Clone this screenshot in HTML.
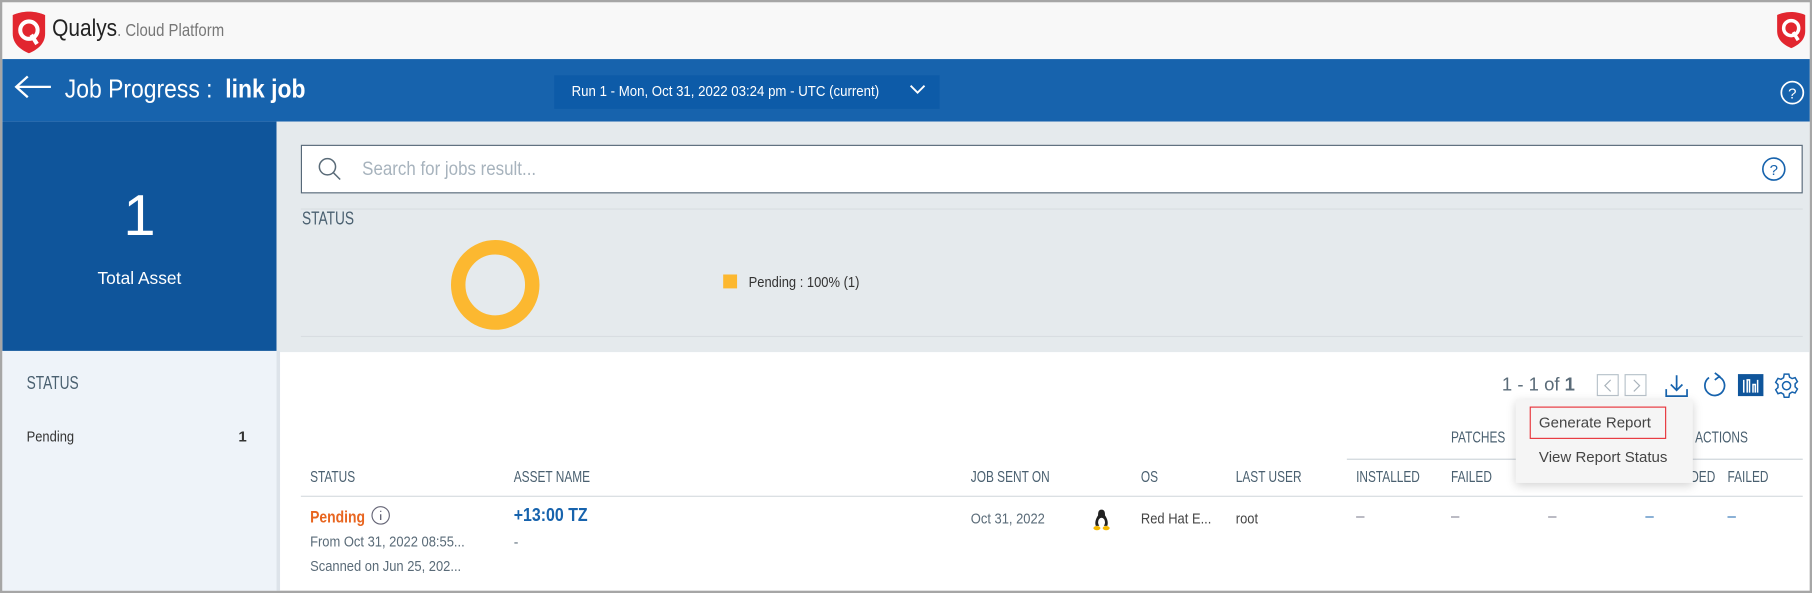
<!DOCTYPE html>
<html><head><meta charset="utf-8"><style>
*{margin:0;padding:0;box-sizing:border-box}
html,body{width:1812px;height:593px;overflow:hidden;background:#fff}
#w{position:absolute;left:0;top:0;width:1566px;height:512px;transform:scale(1.15709,1.1582);transform-origin:0 0;font-family:"Liberation Sans",sans-serif;border:2px solid #a6a6a6;overflow:hidden}
.a{position:absolute;white-space:nowrap}
.n{transform:scaleX(.86);transform-origin:0 0}
.h{color:#4a6070;font-size:13.5px;transform:scaleX(.76);transform-origin:0 0}
</style></head><body><div id="w">
<div class="a" style="left:0;top:0;width:1566px;height:49px;background:#f8f8f8"></div>
<svg class="a" style="left:8px;top:7px" width="30" height="38" viewBox="0 0 30 38"><path d="M15 1 C7 1 1 4 1 4 V20 C1 29 8 34 15 37 C22 34 29 29 29 20 V4 C29 4 23 1 15 1Z" fill="#e2262f"/><circle cx="15" cy="17" r="7.5" fill="none" stroke="#fff" stroke-width="3.5"/><path d="M17 21 L22 29" stroke="#fff" stroke-width="3.5"/></svg>
<div class="a n" style="left:43px;top:11px;font-size:21px;color:#222">Qualys<span style="font-size:15px;color:#777">. Cloud Platform</span></div>
<svg class="a" style="left:1533px;top:7px" width="26" height="34" viewBox="0 0 30 38"><path d="M15 1 C7 1 1 4 1 4 V20 C1 29 8 34 15 37 C22 34 29 29 29 20 V4 C29 4 23 1 15 1Z" fill="#e2262f"/><circle cx="15" cy="17" r="7.5" fill="none" stroke="#fff" stroke-width="3.5"/><path d="M17 21 L22 29" stroke="#fff" stroke-width="3.5"/></svg>
<div class="a" style="left:0;top:49px;width:1566px;height:54px;background:#1763ad"></div>
<svg class="a" style="left:10px;top:62px" width="34" height="22"><path d="M2 11 H32 M12 2 L2 11 L12 20" stroke="#fff" stroke-width="2" fill="none"/></svg>
<div class="a n" style="left:54px;top:62px;font-size:22px;color:#fff;transform:scaleX(.9)">Job Progress :&nbsp; <b>link job</b></div>
<div class="a" style="left:477px;top:63px;width:333px;height:29px;background:#0d5ba8"></div>
<div class="a n" style="left:492px;top:69px;font-size:13px;color:#fff;transform:scaleX(.88)">Run 1 - Mon, Oct 31, 2022 03:24 pm - UTC (current)</div>
<svg class="a" style="left:784px;top:70px" width="14" height="10"><path d="M1 2 L7 8 L13 2" stroke="#fff" stroke-width="1.6" fill="none"/></svg>
<svg class="a" style="left:1536px;top:67px" width="22" height="22"><circle cx="11" cy="11" r="9.5" stroke="#fff" stroke-width="1.5" fill="none"/><text x="11" y="16" text-anchor="middle" font-size="13" fill="#fff" font-family="Liberation Sans">?</text></svg>
<div class="a" style="left:0;top:103px;width:237px;height:198px;background:#0f559b"></div>
<div class="a" style="left:0;top:155px;width:237px;text-align:center;font-size:50px;color:#fff">1</div>
<div class="a" style="left:0;top:230px;width:237px;text-align:center;font-size:15px;color:#fff">Total Asset</div>
<div class="a" style="left:237px;top:103px;width:1329px;height:199px;background:#e5eaed"></div>
<div class="a" style="left:258px;top:123px;width:1298px;height:42px;background:#fff;border:1px solid #566878"></div>
<svg class="a" style="left:271px;top:132px" width="24" height="24"><circle cx="10" cy="10" r="7" stroke="#5a6b78" stroke-width="1.3" fill="none"/><path d="M15 15 L21 21" stroke="#5a6b78" stroke-width="1.3"/></svg>
<div class="a n" style="left:311px;top:134px;font-size:17px;color:#a7b3bd">Search for jobs result...</div>
<svg class="a" style="left:1520px;top:133px" width="22" height="22"><circle cx="11" cy="11" r="9.5" stroke="#1763ad" stroke-width="1.4" fill="none"/><text x="11" y="16" text-anchor="middle" font-size="13" fill="#1763ad" font-family="Liberation Sans">?</text></svg>
<div class="a" style="left:258px;top:178px;width:1298px;height:1px;background:#d8dde1"></div>
<div class="a h" style="left:259px;top:179px;font-size:16px;transform:scaleX(.74)">STATUS</div>
<svg class="a" style="left:384px;top:203px" width="84" height="84"><ellipse cx="42" cy="41" rx="32" ry="32.5" stroke="#fcb830" stroke-width="12.5" fill="none"/></svg>
<div class="a" style="left:623px;top:235px;width:12px;height:12px;background:#fcb830"></div>
<div class="a n" style="left:645px;top:234px;font-size:13px;color:#333">Pending : 100% (1)</div>
<div class="a" style="left:258px;top:288px;width:1298px;height:1px;background:#d8dde1"></div>
<div class="a" style="left:0;top:301px;width:237px;height:211px;background:#eef3f9"></div>
<div class="a" style="left:237px;top:301px;width:3px;height:211px;background:#dde3ea"></div>
<div class="a h" style="left:21px;top:321px;font-size:16px;transform:scaleX(.74)">STATUS</div>
<div class="a n" style="left:21px;top:367px;font-size:13px;color:#333">Pending</div>
<div class="a" style="left:204px;top:367px;font-size:13px;color:#333;font-weight:bold">1</div>
<div class="a" style="left:1296px;top:322px;font-size:16px;color:#5a6b78">1 - 1 of&nbsp;<b>1</b></div>
<div class="a" style="left:1378px;top:321px;width:19px;height:19px;border:1px solid #b8c2ca"></div>
<svg class="a" style="left:1383px;top:325px" width="10" height="12"><path d="M7 1 L2 6 L7 11" stroke="#a8b2ba" fill="none"/></svg>
<div class="a" style="left:1402px;top:321px;width:19px;height:19px;border:1px solid #b8c2ca"></div>
<svg class="a" style="left:1407px;top:325px" width="10" height="12"><path d="M3 1 L8 6 L3 11" stroke="#a8b2ba" fill="none"/></svg>
<svg class="a" style="left:1436px;top:320px" width="22" height="22"><path d="M11 2 V15 M6 10 L11 15 L16 10 M2 14 V20 H20 V14" stroke="#1763ad" stroke-width="1.5" fill="none"/></svg>
<svg class="a" style="left:1468px;top:319px" width="24" height="24"><path d="M15 4 A8.5 8.5 0 1 1 7 5" stroke="#1763ad" stroke-width="1.5" fill="none"/><path d="M12 1 L16 4 L12 7" stroke="#1763ad" stroke-width="1.5" fill="none"/></svg>
<div class="a" style="left:1500px;top:321px;width:22px;height:19px;background:#0f559b"></div>
<svg class="a" style="left:1502px;top:323px" width="18" height="15"><path d="M3 14 V3 M6 14 V3 H8 V14 M11 14 V7 H13 V14 M15 14 V3" stroke="#fff" stroke-width="1.3" fill="none"/></svg>
<svg class="a" style="left:1530px;top:319px" width="24" height="24" viewBox="0 0 24 24"><path d="M10 2h4l.6 2.6 2.2 1.3 2.6-.8 2 3.4-2 1.9v2.6l2 1.9-2 3.4-2.6-.8-2.2 1.3L14 22h-4l-.6-2.6-2.2-1.3-2.6.8-2-3.4 2-1.9v-2.6l-2-1.9 2-3.4 2.6.8 2.2-1.3z" stroke="#1763ad" stroke-width="1.3" fill="none"/><circle cx="12" cy="12" r="3.5" stroke="#1763ad" stroke-width="1.3" fill="none"/></svg>
<div class="a h" style="left:1252px;top:368px">PATCHES</div>
<div class="a h" style="left:1463px;top:368px">ACTIONS</div>
<div class="a" style="left:1162px;top:394px;width:394px;height:1px;background:#ccd3d9"></div>
<div class="a h" style="left:266px;top:402px">STATUS</div>
<div class="a h" style="left:442px;top:402px">ASSET NAME</div>
<div class="a h" style="left:837px;top:402px">JOB SENT ON</div>
<div class="a h" style="left:984px;top:402px">OS</div>
<div class="a h" style="left:1066px;top:402px">LAST USER</div>
<div class="a h" style="left:1170px;top:402px">INSTALLED</div>
<div class="a h" style="left:1252px;top:402px">FAILED</div>
<div class="a h" style="left:1336px;top:402px">SKIPPED</div>
<div class="a h" style="left:1416px;top:402px">SUCCEEDED</div>
<div class="a h" style="left:1491px;top:402px">FAILED</div>
<div class="a" style="left:258px;top:426px;width:1298px;height:1px;background:#d6dbdf"></div>
<div class="a n" style="left:266px;top:436px;font-size:14px;color:#e8651f;font-weight:bold">Pending</div>
<svg class="a" style="left:318px;top:434px" width="18" height="18"><circle cx="9" cy="9" r="7.5" stroke="#667" fill="none"/><path d="M9 8 V13 M9 5 V6" stroke="#667" stroke-width="1.2"/></svg>
<div class="a n" style="left:266px;top:458px;font-size:13px;color:#5a6b78">From Oct 31, 2022 08:55...</div>
<div class="a n" style="left:266px;top:479px;font-size:13px;color:#5a6b78">Scanned on Jun 25, 202...</div>
<div class="a n" style="left:442px;top:435px;font-size:16px;color:#1763ad;font-weight:bold">+13:00 TZ</div>
<div class="a" style="left:442px;top:459px;font-size:12px;color:#5a6b78">-</div>
<div class="a n" style="left:837px;top:438px;font-size:13px;color:#5a6b78">Oct 31, 2022</div>
<svg class="a" style="left:942px;top:437px" width="16" height="20"><path d="M8 1 C5 1 5 4 5 6 C3 9 2 12 3 15 L13 15 C14 12 13 9 11 6 C11 4 11 1 8 1Z" fill="#222"/><ellipse cx="8" cy="12" rx="3" ry="4" fill="#fff"/><ellipse cx="4" cy="17" rx="3" ry="1.8" fill="#f5b800"/><ellipse cx="12" cy="17" rx="3" ry="1.8" fill="#f5b800"/></svg>
<div class="a n" style="left:984px;top:438px;font-size:13px;color:#444">Red Hat E...</div>
<div class="a n" style="left:1066px;top:438px;font-size:13px;color:#444">root</div>
<div class="a" style="left:1170px;top:436px;color:#778;font-size:13px">–</div>
<div class="a" style="left:1252px;top:436px;color:#778;font-size:13px">–</div>
<div class="a" style="left:1336px;top:436px;color:#778;font-size:13px">–</div>
<div class="a" style="left:1420px;top:436px;color:#1763ad;font-size:13px">–</div>
<div class="a" style="left:1491px;top:436px;color:#1763ad;font-size:13px">–</div>
<div class="a" style="left:1308px;top:343px;width:153px;height:72px;background:#f5f5f5;box-shadow:0 2px 8px rgba(0,0,0,.18)"></div>
<div class="a" style="left:1320px;top:349px;width:118px;height:28px;border:1.5px solid #e8343b"></div>
<div class="a" style="left:1328px;top:355px;font-size:13px;color:#444">Generate Report</div>
<div class="a" style="left:1328px;top:385px;font-size:13px;color:#444">View Report Status</div>
</div></body></html>
